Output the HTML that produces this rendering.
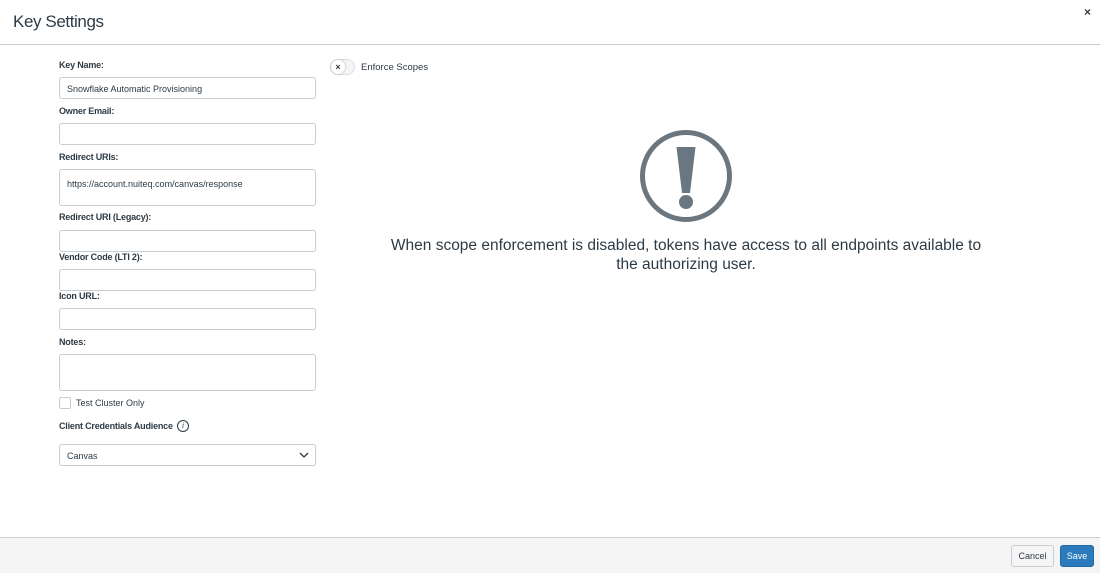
<!DOCTYPE html>
<html><head><style>
*{box-sizing:border-box;margin:0;padding:0}
body{width:1100px;height:573px;position:relative;background:#fff;font-family:"Liberation Sans",sans-serif;color:#2d3b45;overflow:hidden}
.a{position:absolute}
.lbl{position:absolute;left:59px;font-size:9px;font-weight:bold;color:#2d3b45;letter-spacing:-0.2px}
.in{position:absolute;left:59px;width:257px;height:22px;border:1px solid #c7cdd1;border-radius:3px;font-size:9px;padding:6px 7px;color:#2d3b45}
</style></head><body>
<div class="a" style="left:13px;top:12px;font-size:17px;letter-spacing:-0.4px;color:#2d3b45">Key Settings</div>
<div class="a" style="left:1084px;top:5px;font-size:12px;font-weight:bold">×</div>
<div class="a" style="left:0;top:44px;width:1100px;height:1px;background:#c7cdd1"></div>

<div class="lbl" style="top:60px">Key Name:</div>
<div class="in" style="top:77px">Snowflake Automatic Provisioning</div>
<div class="lbl" style="top:106px">Owner Email:</div>
<div class="in" style="top:123px"></div>
<div class="lbl" style="top:152px">Redirect URIs:</div>
<div class="in" style="top:169px;height:37px;padding-top:9px">https://account.nuiteq.com/canvas/response</div>
<div class="lbl" style="top:212px">Redirect URI (Legacy):</div>
<div class="in" style="top:230px"></div>
<div class="lbl" style="top:252px">Vendor Code (LTI 2):</div>
<div class="in" style="top:269px"></div>
<div class="lbl" style="top:291px">Icon URL:</div>
<div class="in" style="top:308px"></div>
<div class="lbl" style="top:337px">Notes:</div>
<div class="in" style="top:354px;height:37px"></div>
<div class="a" style="left:59px;top:397px;width:12px;height:12px;border:1px solid #c7cdd1;border-radius:2px"></div>
<div class="a" style="left:76px;top:398px;font-size:9px">Test Cluster Only</div>
<div class="lbl" style="top:421px">Client Credentials Audience</div>
<div class="a" style="left:177px;top:420px;width:12px;height:12px;border:1px solid #2d3b45;border-radius:50%;font-size:8px;font-style:italic;text-align:center;line-height:10px;font-family:'Liberation Serif',serif">i</div>
<div class="in" style="top:444px">Canvas</div>
<svg class="a" style="left:299px;top:451px" width="10" height="8"><path d="M1 2L5 6L9 2" stroke="#2d3b45" fill="none" stroke-width="1.3"/></svg>

<div class="a" style="left:330px;top:59px;width:25px;height:16px;border-radius:8px;background:#f5f5f5;border:1px solid #dde0e3"></div>
<div class="a" style="left:331px;top:60px;width:14px;height:14px;border-radius:50%;background:#fff;box-shadow:0 0 2px #aaa;font-size:9px;font-weight:bold;text-align:center;line-height:14px">×</div>
<div class="a" style="left:361px;top:62px;font-size:9.5px">Enforce Scopes</div>

<svg class="a" style="left:636px;top:126px" width="100" height="100">
<circle cx="50" cy="50" r="43.5" stroke="#6b7780" stroke-width="5" fill="none"/>
<path d="M40.5 21H59.5L54 67H46Z" fill="#6b7780"/>
<circle cx="50" cy="76" r="7" fill="#6b7780"/>
</svg>
<div class="a" style="left:380px;top:236px;width:612px;text-align:center;font-size:15.5px;line-height:19px;color:#2d3b45">When scope enforcement is disabled, tokens have access to all endpoints available to the authorizing user.</div>

<div class="a" style="left:0;top:537px;width:1100px;height:36px;background:#f5f5f5;border-top:1px solid #c7cdd1"></div>
<div class="a" style="left:1011px;top:545px;width:43px;height:22px;border:1px solid #c7cdd1;border-radius:3px;background:#f5f5f5;font-size:9px;text-align:center;padding-top:5px">Cancel</div>
<div class="a" style="left:1060px;top:545px;width:34px;height:22px;border:1px solid #1d6aa5;border-radius:3px;background:#2b7abc;color:#fff;font-size:9px;text-align:center;padding-top:5px">Save</div>
</body></html>
